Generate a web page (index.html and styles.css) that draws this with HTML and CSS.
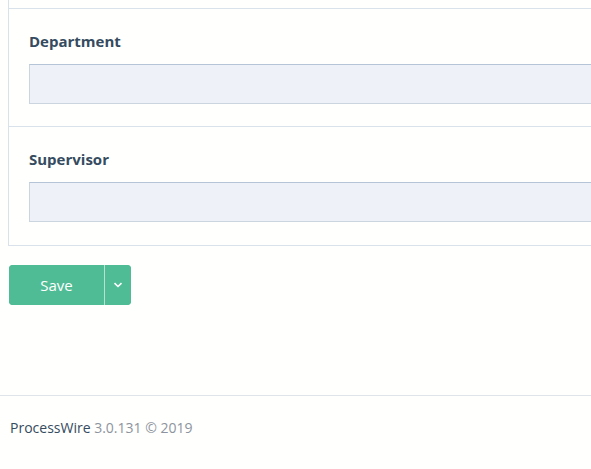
FILE: index.html
```html
<!DOCTYPE html>
<html>
<head>
<meta charset="utf-8">
<link rel="stylesheet" href="styles.css">
</head>
<body>
<div class="page">
  <div class="form-wrap">
    <div class="field">
      <label class="field-label">Department</label>
      <div class="field-input"></div>
    </div>
    <div class="field">
      <label class="field-label">Supervisor</label>
      <div class="field-input"></div>
    </div>
  </div>
  <div class="actions">
    <div class="btn-group">
      <button class="btn-save">Save</button>
      <button class="btn-drop" aria-label="More">
        <svg width="10" height="6" viewBox="0 0 10 6"><path d="M1.5 1.2 L5 4.5 L8.5 1.2" fill="none" stroke="#ffffff" stroke-width="1.6"/></svg>
      </button>
    </div>
  </div>
</div>
<footer class="footer">
  <span class="brand">ProcessWire</span> <span class="version">3.0.131 © 2019</span>
</footer>
</body>
</html>
```
FILE: styles.css
```css
html, body {
  margin: 0;
  padding: 0;
  background: #fffffd;
  font-family: "Open Sans", "Noto Sans", sans-serif;
}
.page {
  width: 100%;
}
.form-wrap {
  margin-left: 8px;
  padding-top: 8px;
  border-left: 1px solid #d9e1ea;
  border-bottom: 1px solid #d9e1ea;
}
.field {
  border-top: 1px solid #d9e1ea;
  padding: 22px 0 22px 20px;
}
.field + .field {
  padding-bottom: 23px;
}
.field-label {
  display: block;
  font-size: 15px;
  font-weight: 700;
  line-height: 21px;
  color: #354b60;
  margin-bottom: 12px;
}
.field-input {
  box-sizing: border-box;
  height: 40px;
  background: #eef2f8;
  border: 1px solid #cbd5e0;
  border-top-color: #b5c4d6;
  border-right: 0;
}
.actions {
  padding: 19px 0 0 9px;
}
.btn-group {
  display: inline-flex;
  height: 40px;
  border-radius: 4px;
  overflow: hidden;
  background: #4fbc96;
}
.btn-save, .btn-drop {
  border: 0;
  margin: 0;
  background: #4fbc96;
  color: #ffffff;
  font-family: "Open Sans", "Noto Sans", sans-serif;
  font-size: 15px;
  line-height: 38px;
  height: 40px;
  cursor: pointer;
}
.btn-save {
  width: 95px;
  padding: 0;
}
.btn-drop {
  width: 27px;
  border-left: 1px solid #b6e2d2;
  display: flex;
  align-items: center;
  justify-content: center;
  padding: 0;
}
.footer {
  margin-top: 90px;
  border-top: 1px solid #dfe3ea;
  padding: 22px 0 0 10px;
  font-size: 14px;
  line-height: 20px;
  color: #354b60;
}
.version {
  color: #8d949e;
}
```
